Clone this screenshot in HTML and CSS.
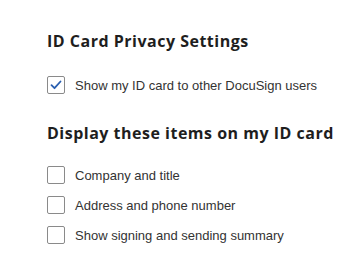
FILE: index.html
```html
<!DOCTYPE html>
<html>
<head>
<meta charset="utf-8">
<link rel="stylesheet" href="styles.css">
</head>
<body>
<div class="page">
  <h2 class="title">ID Card Privacy Settings</h2>
  <div class="opt first">
    <span class="box checked">
      <svg width="12" height="10" viewBox="0 0 12 10"><path d="M1.5 5.2 L4.5 8.2 L10.5 1.5" fill="none" stroke="#2a5fb0" stroke-width="1.8" stroke-linecap="round" stroke-linejoin="round"/></svg>
    </span>
    <span class="label">Show my ID card to other DocuSign users</span>
  </div>
  <h2 class="title second">Display these items on my ID card</h2>
  <div class="list">
    <div class="opt"><span class="box"></span><span class="label">Company and title</span></div>
    <div class="opt"><span class="box"></span><span class="label">Address and phone number</span></div>
    <div class="opt"><span class="box"></span><span class="label">Show signing and sending summary</span></div>
  </div>
</div>
</body>
</html>
```
FILE: styles.css
```css
html, body { margin: 0; padding: 0; background: #fff; }
.page { padding: 30px 0 0 47px; }
.title {
  margin: 0;
  font-family: "Open Sans", sans-serif;
  font-weight: 700;
  font-size: 16px;
  line-height: 22px;
  letter-spacing: 0.5px;
  color: #1e1e1e;
}
.second { margin-top: 28px; }
.opt {
  display: flex;
  align-items: center;
  height: 18px;
}
.opt.first { margin-top: 24px; }
.list { display: flex; flex-direction: column; gap: 12px; margin-top: 22px; }
.box {
  box-sizing: border-box;
  width: 18px;
  height: 18px;
  border: 1px solid #8a8a8a;
  border-radius: 2px;
  display: flex;
  align-items: center;
  justify-content: center;
  flex: none;
}
.label {
  margin-left: 10px;
  font-family: "Liberation Sans", Arial, sans-serif;
  font-size: 13px;
  color: #333;
}
```
